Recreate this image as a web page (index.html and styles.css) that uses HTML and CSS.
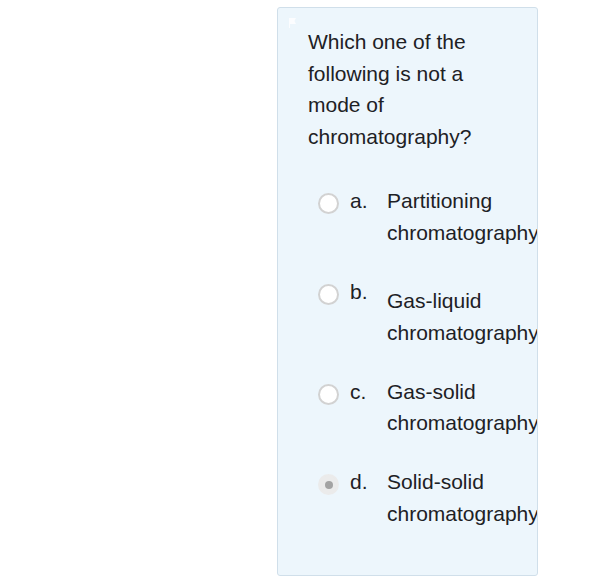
FILE: index.html
```html
<!DOCTYPE html>
<html lang="en">
<head>
<meta charset="utf-8">
<title>Question</title>
<link rel="stylesheet" href="styles.css">
</head>
<body>
<div class="card">
  <svg class="flag" width="10" height="12" viewBox="0 0 10 12" aria-hidden="true">
    <path d="M1 1h7l-1.5 3L8 7H2v4H1z" fill="#ffffff" opacity="0.8"/>
  </svg>
  <div class="qtext">Which one of the following is not a mode of chromatography?</div>
  <div class="answers">
    <div class="option option-first">
      <span class="radio"></span>
      <span class="letter">a.</span>
      <span class="text">Partitioning chromatography</span>
    </div>
    <div class="option">
      <span class="radio"></span>
      <span class="letter">b.</span>
      <span class="text text-shift">Gas-liquid chromatography</span>
    </div>
    <div class="option">
      <span class="radio"></span>
      <span class="letter">c.</span>
      <span class="text">Gas-solid chromatography</span>
    </div>
    <div class="option">
      <span class="radio radio-checked"></span>
      <span class="letter">d.</span>
      <span class="text">Solid-solid chromatography</span>
    </div>
  </div>
</div>
</body>
</html>
```
FILE: styles.css
```css
html, body {
  margin: 0;
  padding: 0;
  background: #ffffff;
}
body {
  font-family: "Liberation Sans", Arial, sans-serif;
  font-size: 21px;
  line-height: 31.7px;
  color: #1d2125;
}
.card {
  position: relative;
  box-sizing: border-box;
  margin: 7px 0 0 277px;
  width: 261px;
  height: 569px;
  background: #edf6fc;
  border: 1px solid #d0dfea;
  border-radius: 3px;
  padding: 18px 30px 0 30px;
  overflow: hidden;
}
.flag {
  position: absolute;
  left: 10px;
  top: 9px;
}
.qtext {
  margin: 0 0 32px 0;
}
.answers {
  display: flex;
  flex-direction: column;
  gap: 27px;
}
.option {
  display: flex;
  align-items: flex-start;
}
.option-first {
  margin-bottom: 1px;
}
.radio {
  flex: none;
  box-sizing: border-box;
  width: 21px;
  height: 21px;
  margin: 8px 11px 0 10px;
  border-radius: 50%;
  background: #ffffff;
  border: 2px solid #d2d2d2;
}
.radio-checked {
  background: #ebebeb;
  border-color: #ebebeb;
  position: relative;
}
.radio-checked::after {
  content: "";
  position: absolute;
  left: 50%;
  top: 50%;
  width: 8px;
  height: 8px;
  margin: -4px 0 0 -4px;
  border-radius: 50%;
  background: #a3a3a3;
}
.letter {
  flex: none;
  width: 37px;
}
.text {
  flex: 1;
  min-width: 0;
}
.text-shift {
  padding-top: 9px;
}
```
